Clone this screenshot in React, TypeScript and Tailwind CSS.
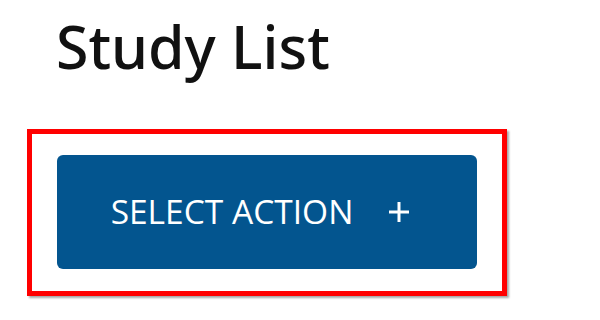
import React from "react";

export default function App() {
  return (
    <div className="w-[600px] h-[320px] bg-white overflow-hidden font-['Open_Sans',sans-serif]">
      <h1 className="pl-[56px] pt-[9px] text-[59px] leading-[75px] text-[#111111] font-medium font-['Noto_Sans',sans-serif]">
        Study List
      </h1>
      <div className="ml-[27px] mt-[45px] w-[480px] h-[167px] border-[5px] border-[#ff0000] shadow-[2px_2px_2px_rgba(0,0,0,0.35)] pl-[25px] pt-[21px]">
        <button className="w-[420px] h-[114px] rounded-[6px] bg-[#03558f] text-white flex items-center justify-center gap-[35px] pr-[13px]">
          <span className="text-[33.5px] leading-none uppercase">Select Action</span>
          <svg width="22" height="22" viewBox="0 0 22 22" className="shrink-0">
            <path d="M11 1v20M1 11h20" stroke="white" strokeWidth="3" fill="none" />
          </svg>
        </button>
      </div>
    </div>
  );
}
